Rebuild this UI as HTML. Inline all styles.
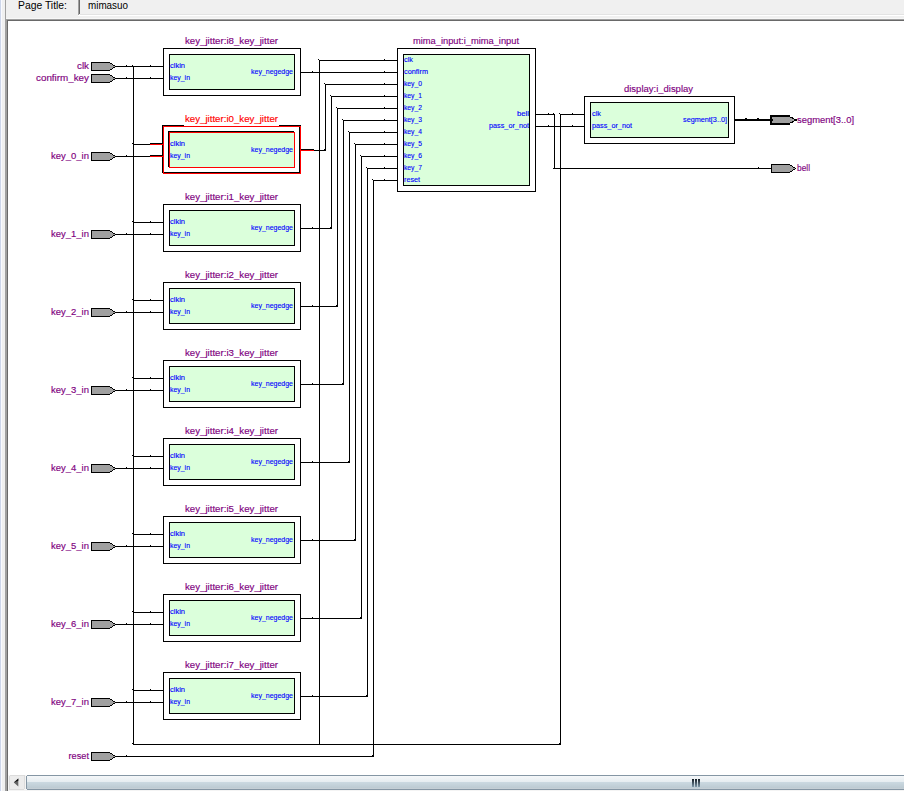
<!DOCTYPE html>
<html><head><meta charset="utf-8"><title>mimasuo</title>
<style>
html,body{margin:0;padding:0;width:904px;height:791px;overflow:hidden;background:#f0f0f0}
svg{display:block}
text{font-family:"Liberation Sans",sans-serif;white-space:pre}
text.s{stroke-width:0.12px}
text.p{stroke-width:0.15px}

rect{shape-rendering:crispEdges}
</style></head><body>
<svg width="904" height="791" viewBox="0 0 904 791">
<rect x="0" y="0" width="904" height="791" fill="#f0f0f0"/>
<rect x="0" y="0" width="1" height="791" fill="#cdd6ea"/>
<rect x="1" y="0" width="1" height="791" fill="#f9faff"/>
<rect x="5" y="0" width="1" height="791" fill="#a0a0a0"/>
<rect x="78" y="0" width="1" height="15" fill="#a0a0a0"/>
<rect x="79" y="0" width="1" height="14" fill="#696969"/>
<rect x="80" y="14" width="824" height="1" fill="#e3e3e3"/>
<rect x="78" y="15" width="826" height="1" fill="#ffffff"/>
<rect x="6" y="18" width="898" height="1" fill="#f8f8f8"/>
<rect x="6" y="19" width="898" height="1" fill="#a0a0a0"/>
<rect x="6" y="19" width="1" height="772" fill="#a0a0a0"/>
<rect x="7" y="20" width="897" height="1" fill="#696969"/>
<rect x="7" y="20" width="1" height="771" fill="#696969"/>
<rect x="8" y="21" width="896" height="754" fill="#ffffff"/>
<text class="h" x="18" y="9" font-size="11" fill="#000" textLength="49" lengthAdjust="spacingAndGlyphs">Page Title:</text>
<text class="h" x="88" y="9" font-size="11" fill="#000" textLength="40" lengthAdjust="spacingAndGlyphs">mimasuo</text>
<rect x="8" y="775" width="896" height="16" fill="#f4f4f4"/>
<rect x="9.5" y="775.5" width="15" height="14" rx="1.5" fill="#ececec" stroke="#dcdcdc"/>
<path d="M13.8 782.5 L18.3 778.6 L18.3 786.4 Z" fill="#666"/>
<path d="M13.8 782.5 L18.3 778.6 L18.3 780.8 Z" fill="#111"/>
<defs><linearGradient id="tg" x1="0" y1="0" x2="0" y2="1"><stop offset="0" stop-color="#f6f8fa"/><stop offset="0.45" stop-color="#e6edf1"/><stop offset="0.5" stop-color="#cad8e0"/><stop offset="0.9" stop-color="#bccad2"/><stop offset="1" stop-color="#d8d8dc"/></linearGradient></defs>
<rect x="26.5" y="775.5" width="900" height="14" rx="2" fill="url(#tg)" stroke="#8596a4"/>
<defs><linearGradient id="gg" x1="0" y1="0" x2="0" y2="1"><stop offset="0" stop-color="#101820"/><stop offset="1" stop-color="#7890a0"/></linearGradient></defs>
<rect x="692" y="779" width="1.6" height="7.5" fill="url(#gg)"/>
<rect x="695" y="779" width="1.6" height="7.5" fill="url(#gg)"/>
<rect x="698" y="779" width="1.6" height="7.5" fill="url(#gg)"/>
<text class="p" x="185" y="44" font-size="9.2" fill="#800080" stroke="#800080" textLength="93" lengthAdjust="spacingAndGlyphs">key_jitter:i8_key_jitter</text>
<rect x="163" y="48" width="138" height="48" fill="#ffffff"/>
<rect x="163" y="48" width="138" height="1" fill="#000"/>
<rect x="163" y="95" width="138" height="1" fill="#000"/>
<rect x="163" y="48" width="1" height="48" fill="#000"/>
<rect x="300" y="48" width="1" height="48" fill="#000"/>
<rect x="169" y="54" width="126" height="36" fill="#dbffdb"/>
<rect x="169" y="54" width="126" height="1" fill="#000"/>
<rect x="169" y="89" width="126" height="1" fill="#000"/>
<rect x="169" y="54" width="1" height="36" fill="#000"/>
<rect x="294" y="54" width="1" height="36" fill="#000"/>
<text class="s" x="170" y="68" font-size="7" fill="#0000ff" stroke="#0000ff" textLength="15" lengthAdjust="spacingAndGlyphs">clkin</text>
<text class="s" x="170" y="80" font-size="7" fill="#0000ff" stroke="#0000ff" textLength="20" lengthAdjust="spacingAndGlyphs">key_in</text>
<text class="s" x="251" y="74" font-size="7" fill="#0000ff" stroke="#0000ff" textLength="42" lengthAdjust="spacingAndGlyphs">key_negedge</text>
<rect x="115" y="66" width="48" height="1" fill="#000"/>
<rect x="126" y="65" width="1" height="1" fill="#000"/>
<rect x="132" y="65" width="1" height="1" fill="#000"/>
<rect x="150" y="65" width="1" height="1" fill="#000"/>
<rect x="115" y="78" width="48" height="1" fill="#000"/>
<rect x="150" y="77" width="1" height="1" fill="#000"/>
<rect x="126" y="77" width="1" height="1" fill="#000"/>
<text class="p" x="185" y="122" font-size="9.2" fill="#ff0000" stroke="#ff0000" textLength="93" lengthAdjust="spacingAndGlyphs">key_jitter:i0_key_jitter</text>
<rect x="162" y="125" width="138" height="1" fill="#000"/>
<rect x="162" y="172" width="138" height="1" fill="#000"/>
<rect x="162" y="125" width="1" height="48" fill="#000"/>
<rect x="299" y="125" width="1" height="48" fill="#000"/>
<rect x="163" y="126" width="138" height="1" fill="#ff0000"/>
<rect x="163" y="173" width="138" height="1" fill="#ff0000"/>
<rect x="163" y="126" width="1" height="48" fill="#ff0000"/>
<rect x="300" y="126" width="1" height="48" fill="#ff0000"/>
<rect x="184" y="125" width="95" height="1" fill="#ffffff"/>
<rect x="300" y="125" width="1" height="1" fill="#000"/>
<rect x="164" y="127" width="135" height="45" fill="#ffffff"/>
<rect x="169" y="132" width="126" height="36" fill="#dbffdb"/>
<rect x="168" y="131" width="126" height="1" fill="#000"/>
<rect x="168" y="166" width="126" height="1" fill="#000"/>
<rect x="168" y="131" width="1" height="36" fill="#000"/>
<rect x="293" y="131" width="1" height="36" fill="#000"/>
<rect x="169" y="132" width="126" height="1" fill="#ff0000"/>
<rect x="169" y="167" width="126" height="1" fill="#ff0000"/>
<rect x="169" y="132" width="1" height="36" fill="#ff0000"/>
<rect x="294" y="132" width="1" height="36" fill="#ff0000"/>
<rect x="170" y="133" width="124" height="34" fill="#dbffdb"/>
<text class="s" x="170" y="146" font-size="7" fill="#0000ff" stroke="#0000ff" textLength="15" lengthAdjust="spacingAndGlyphs">clkin</text>
<text class="s" x="170" y="158" font-size="7" fill="#0000ff" stroke="#0000ff" textLength="20" lengthAdjust="spacingAndGlyphs">key_in</text>
<text class="s" x="251" y="152" font-size="7" fill="#0000ff" stroke="#0000ff" textLength="42" lengthAdjust="spacingAndGlyphs">key_negedge</text>
<rect x="133" y="144" width="17" height="1" fill="#000"/>
<rect x="150" y="143" width="13" height="1" fill="#000"/>
<rect x="150" y="144" width="13" height="1" fill="#ff0000"/>
<rect x="132" y="143" width="1" height="1" fill="#000"/>
<rect x="115" y="156" width="35" height="1" fill="#000"/>
<rect x="150" y="155" width="13" height="1" fill="#000"/>
<rect x="150" y="156" width="13" height="1" fill="#ff0000"/>
<rect x="126" y="155" width="1" height="1" fill="#000"/>
<text class="p" x="185" y="200" font-size="9.2" fill="#800080" stroke="#800080" textLength="93" lengthAdjust="spacingAndGlyphs">key_jitter:i1_key_jitter</text>
<rect x="163" y="204" width="138" height="48" fill="#ffffff"/>
<rect x="163" y="204" width="138" height="1" fill="#000"/>
<rect x="163" y="251" width="138" height="1" fill="#000"/>
<rect x="163" y="204" width="1" height="48" fill="#000"/>
<rect x="300" y="204" width="1" height="48" fill="#000"/>
<rect x="169" y="210" width="126" height="36" fill="#dbffdb"/>
<rect x="169" y="210" width="126" height="1" fill="#000"/>
<rect x="169" y="245" width="126" height="1" fill="#000"/>
<rect x="169" y="210" width="1" height="36" fill="#000"/>
<rect x="294" y="210" width="1" height="36" fill="#000"/>
<text class="s" x="170" y="224" font-size="7" fill="#0000ff" stroke="#0000ff" textLength="15" lengthAdjust="spacingAndGlyphs">clkin</text>
<text class="s" x="170" y="236" font-size="7" fill="#0000ff" stroke="#0000ff" textLength="20" lengthAdjust="spacingAndGlyphs">key_in</text>
<text class="s" x="251" y="230" font-size="7" fill="#0000ff" stroke="#0000ff" textLength="42" lengthAdjust="spacingAndGlyphs">key_negedge</text>
<rect x="133" y="222" width="30" height="1" fill="#000"/>
<rect x="150" y="221" width="1" height="1" fill="#000"/>
<rect x="132" y="221" width="1" height="1" fill="#000"/>
<rect x="115" y="234" width="48" height="1" fill="#000"/>
<rect x="150" y="233" width="1" height="1" fill="#000"/>
<rect x="126" y="233" width="1" height="1" fill="#000"/>
<text class="p" x="185" y="278" font-size="9.2" fill="#800080" stroke="#800080" textLength="93" lengthAdjust="spacingAndGlyphs">key_jitter:i2_key_jitter</text>
<rect x="163" y="282" width="138" height="48" fill="#ffffff"/>
<rect x="163" y="282" width="138" height="1" fill="#000"/>
<rect x="163" y="329" width="138" height="1" fill="#000"/>
<rect x="163" y="282" width="1" height="48" fill="#000"/>
<rect x="300" y="282" width="1" height="48" fill="#000"/>
<rect x="169" y="288" width="126" height="36" fill="#dbffdb"/>
<rect x="169" y="288" width="126" height="1" fill="#000"/>
<rect x="169" y="323" width="126" height="1" fill="#000"/>
<rect x="169" y="288" width="1" height="36" fill="#000"/>
<rect x="294" y="288" width="1" height="36" fill="#000"/>
<text class="s" x="170" y="302" font-size="7" fill="#0000ff" stroke="#0000ff" textLength="15" lengthAdjust="spacingAndGlyphs">clkin</text>
<text class="s" x="170" y="314" font-size="7" fill="#0000ff" stroke="#0000ff" textLength="20" lengthAdjust="spacingAndGlyphs">key_in</text>
<text class="s" x="251" y="308" font-size="7" fill="#0000ff" stroke="#0000ff" textLength="42" lengthAdjust="spacingAndGlyphs">key_negedge</text>
<rect x="133" y="300" width="30" height="1" fill="#000"/>
<rect x="150" y="299" width="1" height="1" fill="#000"/>
<rect x="132" y="299" width="1" height="1" fill="#000"/>
<rect x="115" y="312" width="48" height="1" fill="#000"/>
<rect x="150" y="311" width="1" height="1" fill="#000"/>
<rect x="126" y="311" width="1" height="1" fill="#000"/>
<text class="p" x="185" y="356" font-size="9.2" fill="#800080" stroke="#800080" textLength="93" lengthAdjust="spacingAndGlyphs">key_jitter:i3_key_jitter</text>
<rect x="163" y="360" width="138" height="48" fill="#ffffff"/>
<rect x="163" y="360" width="138" height="1" fill="#000"/>
<rect x="163" y="407" width="138" height="1" fill="#000"/>
<rect x="163" y="360" width="1" height="48" fill="#000"/>
<rect x="300" y="360" width="1" height="48" fill="#000"/>
<rect x="169" y="366" width="126" height="36" fill="#dbffdb"/>
<rect x="169" y="366" width="126" height="1" fill="#000"/>
<rect x="169" y="401" width="126" height="1" fill="#000"/>
<rect x="169" y="366" width="1" height="36" fill="#000"/>
<rect x="294" y="366" width="1" height="36" fill="#000"/>
<text class="s" x="170" y="380" font-size="7" fill="#0000ff" stroke="#0000ff" textLength="15" lengthAdjust="spacingAndGlyphs">clkin</text>
<text class="s" x="170" y="392" font-size="7" fill="#0000ff" stroke="#0000ff" textLength="20" lengthAdjust="spacingAndGlyphs">key_in</text>
<text class="s" x="251" y="386" font-size="7" fill="#0000ff" stroke="#0000ff" textLength="42" lengthAdjust="spacingAndGlyphs">key_negedge</text>
<rect x="133" y="378" width="30" height="1" fill="#000"/>
<rect x="150" y="377" width="1" height="1" fill="#000"/>
<rect x="132" y="377" width="1" height="1" fill="#000"/>
<rect x="115" y="390" width="48" height="1" fill="#000"/>
<rect x="150" y="389" width="1" height="1" fill="#000"/>
<rect x="126" y="389" width="1" height="1" fill="#000"/>
<text class="p" x="185" y="434" font-size="9.2" fill="#800080" stroke="#800080" textLength="93" lengthAdjust="spacingAndGlyphs">key_jitter:i4_key_jitter</text>
<rect x="163" y="438" width="138" height="48" fill="#ffffff"/>
<rect x="163" y="438" width="138" height="1" fill="#000"/>
<rect x="163" y="485" width="138" height="1" fill="#000"/>
<rect x="163" y="438" width="1" height="48" fill="#000"/>
<rect x="300" y="438" width="1" height="48" fill="#000"/>
<rect x="169" y="444" width="126" height="36" fill="#dbffdb"/>
<rect x="169" y="444" width="126" height="1" fill="#000"/>
<rect x="169" y="479" width="126" height="1" fill="#000"/>
<rect x="169" y="444" width="1" height="36" fill="#000"/>
<rect x="294" y="444" width="1" height="36" fill="#000"/>
<text class="s" x="170" y="458" font-size="7" fill="#0000ff" stroke="#0000ff" textLength="15" lengthAdjust="spacingAndGlyphs">clkin</text>
<text class="s" x="170" y="470" font-size="7" fill="#0000ff" stroke="#0000ff" textLength="20" lengthAdjust="spacingAndGlyphs">key_in</text>
<text class="s" x="251" y="464" font-size="7" fill="#0000ff" stroke="#0000ff" textLength="42" lengthAdjust="spacingAndGlyphs">key_negedge</text>
<rect x="133" y="456" width="30" height="1" fill="#000"/>
<rect x="150" y="455" width="1" height="1" fill="#000"/>
<rect x="132" y="455" width="1" height="1" fill="#000"/>
<rect x="115" y="468" width="48" height="1" fill="#000"/>
<rect x="150" y="467" width="1" height="1" fill="#000"/>
<rect x="126" y="467" width="1" height="1" fill="#000"/>
<text class="p" x="185" y="512" font-size="9.2" fill="#800080" stroke="#800080" textLength="93" lengthAdjust="spacingAndGlyphs">key_jitter:i5_key_jitter</text>
<rect x="163" y="516" width="138" height="48" fill="#ffffff"/>
<rect x="163" y="516" width="138" height="1" fill="#000"/>
<rect x="163" y="563" width="138" height="1" fill="#000"/>
<rect x="163" y="516" width="1" height="48" fill="#000"/>
<rect x="300" y="516" width="1" height="48" fill="#000"/>
<rect x="169" y="522" width="126" height="36" fill="#dbffdb"/>
<rect x="169" y="522" width="126" height="1" fill="#000"/>
<rect x="169" y="557" width="126" height="1" fill="#000"/>
<rect x="169" y="522" width="1" height="36" fill="#000"/>
<rect x="294" y="522" width="1" height="36" fill="#000"/>
<text class="s" x="170" y="536" font-size="7" fill="#0000ff" stroke="#0000ff" textLength="15" lengthAdjust="spacingAndGlyphs">clkin</text>
<text class="s" x="170" y="548" font-size="7" fill="#0000ff" stroke="#0000ff" textLength="20" lengthAdjust="spacingAndGlyphs">key_in</text>
<text class="s" x="251" y="542" font-size="7" fill="#0000ff" stroke="#0000ff" textLength="42" lengthAdjust="spacingAndGlyphs">key_negedge</text>
<rect x="133" y="534" width="30" height="1" fill="#000"/>
<rect x="150" y="533" width="1" height="1" fill="#000"/>
<rect x="132" y="533" width="1" height="1" fill="#000"/>
<rect x="115" y="546" width="48" height="1" fill="#000"/>
<rect x="150" y="545" width="1" height="1" fill="#000"/>
<rect x="126" y="545" width="1" height="1" fill="#000"/>
<text class="p" x="185" y="590" font-size="9.2" fill="#800080" stroke="#800080" textLength="93" lengthAdjust="spacingAndGlyphs">key_jitter:i6_key_jitter</text>
<rect x="163" y="594" width="138" height="48" fill="#ffffff"/>
<rect x="163" y="594" width="138" height="1" fill="#000"/>
<rect x="163" y="641" width="138" height="1" fill="#000"/>
<rect x="163" y="594" width="1" height="48" fill="#000"/>
<rect x="300" y="594" width="1" height="48" fill="#000"/>
<rect x="169" y="600" width="126" height="36" fill="#dbffdb"/>
<rect x="169" y="600" width="126" height="1" fill="#000"/>
<rect x="169" y="635" width="126" height="1" fill="#000"/>
<rect x="169" y="600" width="1" height="36" fill="#000"/>
<rect x="294" y="600" width="1" height="36" fill="#000"/>
<text class="s" x="170" y="614" font-size="7" fill="#0000ff" stroke="#0000ff" textLength="15" lengthAdjust="spacingAndGlyphs">clkin</text>
<text class="s" x="170" y="626" font-size="7" fill="#0000ff" stroke="#0000ff" textLength="20" lengthAdjust="spacingAndGlyphs">key_in</text>
<text class="s" x="251" y="620" font-size="7" fill="#0000ff" stroke="#0000ff" textLength="42" lengthAdjust="spacingAndGlyphs">key_negedge</text>
<rect x="133" y="612" width="30" height="1" fill="#000"/>
<rect x="150" y="611" width="1" height="1" fill="#000"/>
<rect x="132" y="611" width="1" height="1" fill="#000"/>
<rect x="115" y="624" width="48" height="1" fill="#000"/>
<rect x="150" y="623" width="1" height="1" fill="#000"/>
<rect x="126" y="623" width="1" height="1" fill="#000"/>
<text class="p" x="185" y="668" font-size="9.2" fill="#800080" stroke="#800080" textLength="93" lengthAdjust="spacingAndGlyphs">key_jitter:i7_key_jitter</text>
<rect x="163" y="672" width="138" height="48" fill="#ffffff"/>
<rect x="163" y="672" width="138" height="1" fill="#000"/>
<rect x="163" y="719" width="138" height="1" fill="#000"/>
<rect x="163" y="672" width="1" height="48" fill="#000"/>
<rect x="300" y="672" width="1" height="48" fill="#000"/>
<rect x="169" y="678" width="126" height="36" fill="#dbffdb"/>
<rect x="169" y="678" width="126" height="1" fill="#000"/>
<rect x="169" y="713" width="126" height="1" fill="#000"/>
<rect x="169" y="678" width="1" height="36" fill="#000"/>
<rect x="294" y="678" width="1" height="36" fill="#000"/>
<text class="s" x="170" y="692" font-size="7" fill="#0000ff" stroke="#0000ff" textLength="15" lengthAdjust="spacingAndGlyphs">clkin</text>
<text class="s" x="170" y="704" font-size="7" fill="#0000ff" stroke="#0000ff" textLength="20" lengthAdjust="spacingAndGlyphs">key_in</text>
<text class="s" x="251" y="698" font-size="7" fill="#0000ff" stroke="#0000ff" textLength="42" lengthAdjust="spacingAndGlyphs">key_negedge</text>
<rect x="133" y="690" width="30" height="1" fill="#000"/>
<rect x="150" y="689" width="1" height="1" fill="#000"/>
<rect x="132" y="689" width="1" height="1" fill="#000"/>
<rect x="115" y="702" width="48" height="1" fill="#000"/>
<rect x="150" y="701" width="1" height="1" fill="#000"/>
<rect x="126" y="701" width="1" height="1" fill="#000"/>
<rect x="133" y="66" width="1" height="679" fill="#000"/>
<rect x="133" y="744" width="428" height="1" fill="#000"/>
<rect x="132" y="743" width="1" height="1" fill="#000"/>
<rect x="91" y="62" width="19" height="1" fill="#000"/>
<rect x="91" y="70" width="19" height="1" fill="#000"/>
<rect x="91" y="62" width="1" height="9" fill="#000"/>
<rect x="92" y="69" width="18" height="1" fill="#a0a0a0"/>
<rect x="110" y="69" width="2" height="1" fill="#000"/>
<rect x="92" y="63" width="18" height="1" fill="#a0a0a0"/>
<rect x="110" y="63" width="2" height="1" fill="#000"/>
<rect x="92" y="68" width="20" height="1" fill="#a0a0a0"/>
<rect x="112" y="68" width="1" height="1" fill="#000"/>
<rect x="92" y="64" width="20" height="1" fill="#a0a0a0"/>
<rect x="112" y="64" width="1" height="1" fill="#000"/>
<rect x="92" y="67" width="21" height="1" fill="#a0a0a0"/>
<rect x="113" y="67" width="2" height="1" fill="#000"/>
<rect x="92" y="65" width="21" height="1" fill="#a0a0a0"/>
<rect x="113" y="65" width="2" height="1" fill="#000"/>
<rect x="92" y="66" width="23" height="1" fill="#a0a0a0"/>
<rect x="115" y="66" width="1" height="1" fill="#000"/>
<text class="p" x="77" y="69" font-size="9.2" fill="#800080" stroke="#800080" textLength="12" lengthAdjust="spacingAndGlyphs">clk</text>
<rect x="91" y="74" width="19" height="1" fill="#000"/>
<rect x="91" y="82" width="19" height="1" fill="#000"/>
<rect x="91" y="74" width="1" height="9" fill="#000"/>
<rect x="92" y="81" width="18" height="1" fill="#a0a0a0"/>
<rect x="110" y="81" width="2" height="1" fill="#000"/>
<rect x="92" y="75" width="18" height="1" fill="#a0a0a0"/>
<rect x="110" y="75" width="2" height="1" fill="#000"/>
<rect x="92" y="80" width="20" height="1" fill="#a0a0a0"/>
<rect x="112" y="80" width="1" height="1" fill="#000"/>
<rect x="92" y="76" width="20" height="1" fill="#a0a0a0"/>
<rect x="112" y="76" width="1" height="1" fill="#000"/>
<rect x="92" y="79" width="21" height="1" fill="#a0a0a0"/>
<rect x="113" y="79" width="2" height="1" fill="#000"/>
<rect x="92" y="77" width="21" height="1" fill="#a0a0a0"/>
<rect x="113" y="77" width="2" height="1" fill="#000"/>
<rect x="92" y="78" width="23" height="1" fill="#a0a0a0"/>
<rect x="115" y="78" width="1" height="1" fill="#000"/>
<text class="p" x="36" y="81" font-size="9.2" fill="#800080" stroke="#800080" textLength="53" lengthAdjust="spacingAndGlyphs">confirm_key</text>
<rect x="91" y="152" width="19" height="1" fill="#000"/>
<rect x="91" y="160" width="19" height="1" fill="#000"/>
<rect x="91" y="152" width="1" height="9" fill="#000"/>
<rect x="92" y="159" width="18" height="1" fill="#a0a0a0"/>
<rect x="110" y="159" width="2" height="1" fill="#000"/>
<rect x="92" y="153" width="18" height="1" fill="#a0a0a0"/>
<rect x="110" y="153" width="2" height="1" fill="#000"/>
<rect x="92" y="158" width="20" height="1" fill="#a0a0a0"/>
<rect x="112" y="158" width="1" height="1" fill="#000"/>
<rect x="92" y="154" width="20" height="1" fill="#a0a0a0"/>
<rect x="112" y="154" width="1" height="1" fill="#000"/>
<rect x="92" y="157" width="21" height="1" fill="#a0a0a0"/>
<rect x="113" y="157" width="2" height="1" fill="#000"/>
<rect x="92" y="155" width="21" height="1" fill="#a0a0a0"/>
<rect x="113" y="155" width="2" height="1" fill="#000"/>
<rect x="92" y="156" width="23" height="1" fill="#a0a0a0"/>
<rect x="115" y="156" width="1" height="1" fill="#000"/>
<text class="p" x="51" y="159" font-size="9.2" fill="#800080" stroke="#800080" textLength="38" lengthAdjust="spacingAndGlyphs">key_0_in</text>
<rect x="91" y="230" width="19" height="1" fill="#000"/>
<rect x="91" y="238" width="19" height="1" fill="#000"/>
<rect x="91" y="230" width="1" height="9" fill="#000"/>
<rect x="92" y="237" width="18" height="1" fill="#a0a0a0"/>
<rect x="110" y="237" width="2" height="1" fill="#000"/>
<rect x="92" y="231" width="18" height="1" fill="#a0a0a0"/>
<rect x="110" y="231" width="2" height="1" fill="#000"/>
<rect x="92" y="236" width="20" height="1" fill="#a0a0a0"/>
<rect x="112" y="236" width="1" height="1" fill="#000"/>
<rect x="92" y="232" width="20" height="1" fill="#a0a0a0"/>
<rect x="112" y="232" width="1" height="1" fill="#000"/>
<rect x="92" y="235" width="21" height="1" fill="#a0a0a0"/>
<rect x="113" y="235" width="2" height="1" fill="#000"/>
<rect x="92" y="233" width="21" height="1" fill="#a0a0a0"/>
<rect x="113" y="233" width="2" height="1" fill="#000"/>
<rect x="92" y="234" width="23" height="1" fill="#a0a0a0"/>
<rect x="115" y="234" width="1" height="1" fill="#000"/>
<text class="p" x="51" y="237" font-size="9.2" fill="#800080" stroke="#800080" textLength="38" lengthAdjust="spacingAndGlyphs">key_1_in</text>
<rect x="91" y="308" width="19" height="1" fill="#000"/>
<rect x="91" y="316" width="19" height="1" fill="#000"/>
<rect x="91" y="308" width="1" height="9" fill="#000"/>
<rect x="92" y="315" width="18" height="1" fill="#a0a0a0"/>
<rect x="110" y="315" width="2" height="1" fill="#000"/>
<rect x="92" y="309" width="18" height="1" fill="#a0a0a0"/>
<rect x="110" y="309" width="2" height="1" fill="#000"/>
<rect x="92" y="314" width="20" height="1" fill="#a0a0a0"/>
<rect x="112" y="314" width="1" height="1" fill="#000"/>
<rect x="92" y="310" width="20" height="1" fill="#a0a0a0"/>
<rect x="112" y="310" width="1" height="1" fill="#000"/>
<rect x="92" y="313" width="21" height="1" fill="#a0a0a0"/>
<rect x="113" y="313" width="2" height="1" fill="#000"/>
<rect x="92" y="311" width="21" height="1" fill="#a0a0a0"/>
<rect x="113" y="311" width="2" height="1" fill="#000"/>
<rect x="92" y="312" width="23" height="1" fill="#a0a0a0"/>
<rect x="115" y="312" width="1" height="1" fill="#000"/>
<text class="p" x="51" y="315" font-size="9.2" fill="#800080" stroke="#800080" textLength="38" lengthAdjust="spacingAndGlyphs">key_2_in</text>
<rect x="91" y="386" width="19" height="1" fill="#000"/>
<rect x="91" y="394" width="19" height="1" fill="#000"/>
<rect x="91" y="386" width="1" height="9" fill="#000"/>
<rect x="92" y="393" width="18" height="1" fill="#a0a0a0"/>
<rect x="110" y="393" width="2" height="1" fill="#000"/>
<rect x="92" y="387" width="18" height="1" fill="#a0a0a0"/>
<rect x="110" y="387" width="2" height="1" fill="#000"/>
<rect x="92" y="392" width="20" height="1" fill="#a0a0a0"/>
<rect x="112" y="392" width="1" height="1" fill="#000"/>
<rect x="92" y="388" width="20" height="1" fill="#a0a0a0"/>
<rect x="112" y="388" width="1" height="1" fill="#000"/>
<rect x="92" y="391" width="21" height="1" fill="#a0a0a0"/>
<rect x="113" y="391" width="2" height="1" fill="#000"/>
<rect x="92" y="389" width="21" height="1" fill="#a0a0a0"/>
<rect x="113" y="389" width="2" height="1" fill="#000"/>
<rect x="92" y="390" width="23" height="1" fill="#a0a0a0"/>
<rect x="115" y="390" width="1" height="1" fill="#000"/>
<text class="p" x="51" y="393" font-size="9.2" fill="#800080" stroke="#800080" textLength="38" lengthAdjust="spacingAndGlyphs">key_3_in</text>
<rect x="91" y="464" width="19" height="1" fill="#000"/>
<rect x="91" y="472" width="19" height="1" fill="#000"/>
<rect x="91" y="464" width="1" height="9" fill="#000"/>
<rect x="92" y="471" width="18" height="1" fill="#a0a0a0"/>
<rect x="110" y="471" width="2" height="1" fill="#000"/>
<rect x="92" y="465" width="18" height="1" fill="#a0a0a0"/>
<rect x="110" y="465" width="2" height="1" fill="#000"/>
<rect x="92" y="470" width="20" height="1" fill="#a0a0a0"/>
<rect x="112" y="470" width="1" height="1" fill="#000"/>
<rect x="92" y="466" width="20" height="1" fill="#a0a0a0"/>
<rect x="112" y="466" width="1" height="1" fill="#000"/>
<rect x="92" y="469" width="21" height="1" fill="#a0a0a0"/>
<rect x="113" y="469" width="2" height="1" fill="#000"/>
<rect x="92" y="467" width="21" height="1" fill="#a0a0a0"/>
<rect x="113" y="467" width="2" height="1" fill="#000"/>
<rect x="92" y="468" width="23" height="1" fill="#a0a0a0"/>
<rect x="115" y="468" width="1" height="1" fill="#000"/>
<text class="p" x="51" y="471" font-size="9.2" fill="#800080" stroke="#800080" textLength="38" lengthAdjust="spacingAndGlyphs">key_4_in</text>
<rect x="91" y="542" width="19" height="1" fill="#000"/>
<rect x="91" y="550" width="19" height="1" fill="#000"/>
<rect x="91" y="542" width="1" height="9" fill="#000"/>
<rect x="92" y="549" width="18" height="1" fill="#a0a0a0"/>
<rect x="110" y="549" width="2" height="1" fill="#000"/>
<rect x="92" y="543" width="18" height="1" fill="#a0a0a0"/>
<rect x="110" y="543" width="2" height="1" fill="#000"/>
<rect x="92" y="548" width="20" height="1" fill="#a0a0a0"/>
<rect x="112" y="548" width="1" height="1" fill="#000"/>
<rect x="92" y="544" width="20" height="1" fill="#a0a0a0"/>
<rect x="112" y="544" width="1" height="1" fill="#000"/>
<rect x="92" y="547" width="21" height="1" fill="#a0a0a0"/>
<rect x="113" y="547" width="2" height="1" fill="#000"/>
<rect x="92" y="545" width="21" height="1" fill="#a0a0a0"/>
<rect x="113" y="545" width="2" height="1" fill="#000"/>
<rect x="92" y="546" width="23" height="1" fill="#a0a0a0"/>
<rect x="115" y="546" width="1" height="1" fill="#000"/>
<text class="p" x="51" y="549" font-size="9.2" fill="#800080" stroke="#800080" textLength="38" lengthAdjust="spacingAndGlyphs">key_5_in</text>
<rect x="91" y="620" width="19" height="1" fill="#000"/>
<rect x="91" y="628" width="19" height="1" fill="#000"/>
<rect x="91" y="620" width="1" height="9" fill="#000"/>
<rect x="92" y="627" width="18" height="1" fill="#a0a0a0"/>
<rect x="110" y="627" width="2" height="1" fill="#000"/>
<rect x="92" y="621" width="18" height="1" fill="#a0a0a0"/>
<rect x="110" y="621" width="2" height="1" fill="#000"/>
<rect x="92" y="626" width="20" height="1" fill="#a0a0a0"/>
<rect x="112" y="626" width="1" height="1" fill="#000"/>
<rect x="92" y="622" width="20" height="1" fill="#a0a0a0"/>
<rect x="112" y="622" width="1" height="1" fill="#000"/>
<rect x="92" y="625" width="21" height="1" fill="#a0a0a0"/>
<rect x="113" y="625" width="2" height="1" fill="#000"/>
<rect x="92" y="623" width="21" height="1" fill="#a0a0a0"/>
<rect x="113" y="623" width="2" height="1" fill="#000"/>
<rect x="92" y="624" width="23" height="1" fill="#a0a0a0"/>
<rect x="115" y="624" width="1" height="1" fill="#000"/>
<text class="p" x="51" y="627" font-size="9.2" fill="#800080" stroke="#800080" textLength="38" lengthAdjust="spacingAndGlyphs">key_6_in</text>
<rect x="91" y="698" width="19" height="1" fill="#000"/>
<rect x="91" y="706" width="19" height="1" fill="#000"/>
<rect x="91" y="698" width="1" height="9" fill="#000"/>
<rect x="92" y="705" width="18" height="1" fill="#a0a0a0"/>
<rect x="110" y="705" width="2" height="1" fill="#000"/>
<rect x="92" y="699" width="18" height="1" fill="#a0a0a0"/>
<rect x="110" y="699" width="2" height="1" fill="#000"/>
<rect x="92" y="704" width="20" height="1" fill="#a0a0a0"/>
<rect x="112" y="704" width="1" height="1" fill="#000"/>
<rect x="92" y="700" width="20" height="1" fill="#a0a0a0"/>
<rect x="112" y="700" width="1" height="1" fill="#000"/>
<rect x="92" y="703" width="21" height="1" fill="#a0a0a0"/>
<rect x="113" y="703" width="2" height="1" fill="#000"/>
<rect x="92" y="701" width="21" height="1" fill="#a0a0a0"/>
<rect x="113" y="701" width="2" height="1" fill="#000"/>
<rect x="92" y="702" width="23" height="1" fill="#a0a0a0"/>
<rect x="115" y="702" width="1" height="1" fill="#000"/>
<text class="p" x="51" y="705" font-size="9.2" fill="#800080" stroke="#800080" textLength="38" lengthAdjust="spacingAndGlyphs">key_7_in</text>
<rect x="91" y="752" width="19" height="1" fill="#000"/>
<rect x="91" y="760" width="19" height="1" fill="#000"/>
<rect x="91" y="752" width="1" height="9" fill="#000"/>
<rect x="92" y="759" width="18" height="1" fill="#a0a0a0"/>
<rect x="110" y="759" width="2" height="1" fill="#000"/>
<rect x="92" y="753" width="18" height="1" fill="#a0a0a0"/>
<rect x="110" y="753" width="2" height="1" fill="#000"/>
<rect x="92" y="758" width="20" height="1" fill="#a0a0a0"/>
<rect x="112" y="758" width="1" height="1" fill="#000"/>
<rect x="92" y="754" width="20" height="1" fill="#a0a0a0"/>
<rect x="112" y="754" width="1" height="1" fill="#000"/>
<rect x="92" y="757" width="21" height="1" fill="#a0a0a0"/>
<rect x="113" y="757" width="2" height="1" fill="#000"/>
<rect x="92" y="755" width="21" height="1" fill="#a0a0a0"/>
<rect x="113" y="755" width="2" height="1" fill="#000"/>
<rect x="92" y="756" width="23" height="1" fill="#a0a0a0"/>
<rect x="115" y="756" width="1" height="1" fill="#000"/>
<text class="p" x="68.5" y="759" font-size="9.2" fill="#800080" stroke="#800080" textLength="20.5" lengthAdjust="spacingAndGlyphs">reset</text>
<rect x="115" y="756" width="259" height="1" fill="#000"/>
<rect x="126" y="755" width="1" height="1" fill="#000"/>
<text class="p" x="413" y="44" font-size="9.2" fill="#800080" stroke="#800080" textLength="106" lengthAdjust="spacingAndGlyphs">mima_input:i_mima_input</text>
<rect x="397" y="48" width="139" height="144" fill="#ffffff"/>
<rect x="397" y="48" width="139" height="1" fill="#000"/>
<rect x="397" y="191" width="139" height="1" fill="#000"/>
<rect x="397" y="48" width="1" height="144" fill="#000"/>
<rect x="535" y="48" width="1" height="144" fill="#000"/>
<rect x="403" y="54" width="127" height="132" fill="#dbffdb"/>
<rect x="403" y="54" width="127" height="1" fill="#000"/>
<rect x="403" y="185" width="127" height="1" fill="#000"/>
<rect x="403" y="54" width="1" height="132" fill="#000"/>
<rect x="529" y="54" width="1" height="132" fill="#000"/>
<text class="s" x="404" y="62" font-size="7" fill="#0000ff" stroke="#0000ff" textLength="9" lengthAdjust="spacingAndGlyphs">clk</text>
<text class="s" x="404" y="74" font-size="7" fill="#0000ff" stroke="#0000ff" textLength="24" lengthAdjust="spacingAndGlyphs">confirm</text>
<text class="s" x="404" y="86" font-size="7" fill="#0000ff" stroke="#0000ff" textLength="18" lengthAdjust="spacingAndGlyphs">key_0</text>
<text class="s" x="404" y="98" font-size="7" fill="#0000ff" stroke="#0000ff" textLength="18" lengthAdjust="spacingAndGlyphs">key_1</text>
<text class="s" x="404" y="110" font-size="7" fill="#0000ff" stroke="#0000ff" textLength="18" lengthAdjust="spacingAndGlyphs">key_2</text>
<text class="s" x="404" y="122" font-size="7" fill="#0000ff" stroke="#0000ff" textLength="18" lengthAdjust="spacingAndGlyphs">key_3</text>
<text class="s" x="404" y="134" font-size="7" fill="#0000ff" stroke="#0000ff" textLength="18" lengthAdjust="spacingAndGlyphs">key_4</text>
<text class="s" x="404" y="146" font-size="7" fill="#0000ff" stroke="#0000ff" textLength="18" lengthAdjust="spacingAndGlyphs">key_5</text>
<text class="s" x="404" y="158" font-size="7" fill="#0000ff" stroke="#0000ff" textLength="18" lengthAdjust="spacingAndGlyphs">key_6</text>
<text class="s" x="404" y="170" font-size="7" fill="#0000ff" stroke="#0000ff" textLength="18" lengthAdjust="spacingAndGlyphs">key_7</text>
<text class="s" x="404" y="182" font-size="7" fill="#0000ff" stroke="#0000ff" textLength="16" lengthAdjust="spacingAndGlyphs">reset</text>
<text class="s" x="517" y="116" font-size="7" fill="#0000ff" stroke="#0000ff" textLength="12" lengthAdjust="spacingAndGlyphs">bell</text>
<text class="s" x="489" y="128" font-size="7" fill="#0000ff" stroke="#0000ff" textLength="40" lengthAdjust="spacingAndGlyphs">pass_or_not</text>
<rect x="319" y="60" width="1" height="685" fill="#000"/>
<rect x="319" y="60" width="78" height="1" fill="#000"/>
<rect x="318" y="59" width="1" height="1" fill="#000"/>
<rect x="384" y="59" width="1" height="1" fill="#000"/>
<rect x="301" y="72" width="96" height="1" fill="#000"/>
<rect x="312" y="71" width="1" height="1" fill="#000"/>
<rect x="384" y="71" width="1" height="1" fill="#000"/>
<rect x="301" y="150" width="13" height="1" fill="#ff0000"/>
<rect x="301" y="149" width="13" height="1" fill="#000"/>
<rect x="314" y="150" width="12" height="1" fill="#000"/>
<rect x="325" y="84" width="1" height="67" fill="#000"/>
<rect x="324" y="149" width="1" height="1" fill="#000"/>
<rect x="325" y="84" width="72" height="1" fill="#000"/>
<rect x="324" y="83" width="1" height="1" fill="#000"/>
<rect x="384" y="83" width="1" height="1" fill="#000"/>
<rect x="301" y="228" width="31" height="1" fill="#000"/>
<rect x="312" y="227" width="1" height="1" fill="#000"/>
<rect x="331" y="96" width="1" height="133" fill="#000"/>
<rect x="330" y="227" width="1" height="1" fill="#000"/>
<rect x="331" y="96" width="66" height="1" fill="#000"/>
<rect x="330" y="95" width="1" height="1" fill="#000"/>
<rect x="384" y="95" width="1" height="1" fill="#000"/>
<rect x="301" y="306" width="37" height="1" fill="#000"/>
<rect x="312" y="305" width="1" height="1" fill="#000"/>
<rect x="337" y="108" width="1" height="199" fill="#000"/>
<rect x="336" y="305" width="1" height="1" fill="#000"/>
<rect x="337" y="108" width="60" height="1" fill="#000"/>
<rect x="336" y="107" width="1" height="1" fill="#000"/>
<rect x="384" y="107" width="1" height="1" fill="#000"/>
<rect x="301" y="384" width="43" height="1" fill="#000"/>
<rect x="312" y="383" width="1" height="1" fill="#000"/>
<rect x="343" y="120" width="1" height="265" fill="#000"/>
<rect x="342" y="383" width="1" height="1" fill="#000"/>
<rect x="343" y="120" width="54" height="1" fill="#000"/>
<rect x="342" y="119" width="1" height="1" fill="#000"/>
<rect x="384" y="119" width="1" height="1" fill="#000"/>
<rect x="301" y="462" width="49" height="1" fill="#000"/>
<rect x="312" y="461" width="1" height="1" fill="#000"/>
<rect x="349" y="132" width="1" height="331" fill="#000"/>
<rect x="348" y="461" width="1" height="1" fill="#000"/>
<rect x="349" y="132" width="48" height="1" fill="#000"/>
<rect x="348" y="131" width="1" height="1" fill="#000"/>
<rect x="384" y="131" width="1" height="1" fill="#000"/>
<rect x="301" y="540" width="55" height="1" fill="#000"/>
<rect x="312" y="539" width="1" height="1" fill="#000"/>
<rect x="355" y="144" width="1" height="397" fill="#000"/>
<rect x="354" y="539" width="1" height="1" fill="#000"/>
<rect x="355" y="144" width="42" height="1" fill="#000"/>
<rect x="354" y="143" width="1" height="1" fill="#000"/>
<rect x="384" y="143" width="1" height="1" fill="#000"/>
<rect x="301" y="618" width="61" height="1" fill="#000"/>
<rect x="312" y="617" width="1" height="1" fill="#000"/>
<rect x="361" y="156" width="1" height="463" fill="#000"/>
<rect x="360" y="617" width="1" height="1" fill="#000"/>
<rect x="361" y="156" width="36" height="1" fill="#000"/>
<rect x="360" y="155" width="1" height="1" fill="#000"/>
<rect x="384" y="155" width="1" height="1" fill="#000"/>
<rect x="301" y="696" width="67" height="1" fill="#000"/>
<rect x="312" y="695" width="1" height="1" fill="#000"/>
<rect x="367" y="168" width="1" height="529" fill="#000"/>
<rect x="366" y="695" width="1" height="1" fill="#000"/>
<rect x="367" y="168" width="30" height="1" fill="#000"/>
<rect x="366" y="167" width="1" height="1" fill="#000"/>
<rect x="384" y="167" width="1" height="1" fill="#000"/>
<rect x="373" y="180" width="1" height="577" fill="#000"/>
<rect x="373" y="180" width="24" height="1" fill="#000"/>
<rect x="372" y="179" width="1" height="1" fill="#000"/>
<rect x="384" y="179" width="1" height="1" fill="#000"/>
<rect x="372" y="755" width="1" height="1" fill="#000"/>
<rect x="536" y="114" width="19" height="1" fill="#000"/>
<rect x="554" y="114" width="1" height="55" fill="#000"/>
<rect x="554" y="168" width="217" height="1" fill="#000"/>
<rect x="548" y="113" width="1" height="1" fill="#000"/>
<rect x="553" y="113" width="1" height="1" fill="#000"/>
<rect x="553" y="168" width="1" height="1" fill="#000"/>
<rect x="758" y="167" width="1" height="1" fill="#000"/>
<rect x="536" y="126" width="48" height="1" fill="#000"/>
<rect x="548" y="125" width="1" height="1" fill="#000"/>
<rect x="572" y="125" width="1" height="1" fill="#000"/>
<rect x="560" y="114" width="1" height="631" fill="#000"/>
<rect x="560" y="114" width="24" height="1" fill="#000"/>
<rect x="559" y="113" width="1" height="1" fill="#000"/>
<rect x="572" y="113" width="1" height="1" fill="#000"/>
<rect x="559" y="743" width="1" height="1" fill="#000"/>
<text class="p" x="624" y="92" font-size="9.2" fill="#800080" stroke="#800080" textLength="69" lengthAdjust="spacingAndGlyphs">display:i_display</text>
<rect x="584" y="96" width="151" height="48" fill="#ffffff"/>
<rect x="584" y="96" width="151" height="1" fill="#000"/>
<rect x="584" y="143" width="151" height="1" fill="#000"/>
<rect x="584" y="96" width="1" height="48" fill="#000"/>
<rect x="734" y="96" width="1" height="48" fill="#000"/>
<rect x="590" y="102" width="139" height="36" fill="#dbffdb"/>
<rect x="590" y="102" width="139" height="1" fill="#000"/>
<rect x="590" y="137" width="139" height="1" fill="#000"/>
<rect x="590" y="102" width="1" height="36" fill="#000"/>
<rect x="728" y="102" width="1" height="36" fill="#000"/>
<text class="s" x="592" y="116" font-size="7" fill="#0000ff" stroke="#0000ff" textLength="9" lengthAdjust="spacingAndGlyphs">clk</text>
<text class="s" x="592" y="128" font-size="7" fill="#0000ff" stroke="#0000ff" textLength="40" lengthAdjust="spacingAndGlyphs">pass_or_not</text>
<text class="s" x="683" y="122" font-size="7" fill="#0000ff" stroke="#0000ff" textLength="44" lengthAdjust="spacingAndGlyphs">segment[3..0]</text>
<rect x="735" y="119" width="35" height="2" fill="#000"/>
<rect x="745" y="118" width="2" height="1" fill="#000"/>
<rect x="757" y="118" width="2" height="1" fill="#000"/>
<rect x="770" y="115" width="20" height="2" fill="#000"/>
<rect x="770" y="123" width="20" height="2" fill="#000"/>
<rect x="770" y="115" width="2" height="10" fill="#000"/>
<rect x="772" y="117" width="18" height="1" fill="#a0a0a0"/>
<rect x="790" y="117" width="3" height="1" fill="#000"/>
<rect x="772" y="118" width="20" height="1" fill="#a0a0a0"/>
<rect x="792" y="118" width="2" height="1" fill="#000"/>
<rect x="772" y="119" width="22" height="1" fill="#a0a0a0"/>
<rect x="794" y="119" width="3" height="1" fill="#000"/>
<rect x="772" y="120" width="22" height="1" fill="#a0a0a0"/>
<rect x="794" y="120" width="3" height="1" fill="#000"/>
<rect x="772" y="121" width="20" height="1" fill="#a0a0a0"/>
<rect x="792" y="121" width="2" height="1" fill="#000"/>
<rect x="772" y="122" width="18" height="1" fill="#a0a0a0"/>
<rect x="790" y="122" width="3" height="1" fill="#000"/>
<rect x="770" y="119" width="3" height="1" fill="#000"/>
<rect x="770" y="120" width="3" height="1" fill="#000"/>
<text class="p" x="797" y="123" font-size="9.2" fill="#800080" stroke="#800080" textLength="57" lengthAdjust="spacingAndGlyphs">segment[3..0]</text>
<rect x="771" y="164" width="19" height="1" fill="#000"/>
<rect x="771" y="172" width="19" height="1" fill="#000"/>
<rect x="771" y="164" width="1" height="9" fill="#000"/>
<rect x="772" y="171" width="18" height="1" fill="#a0a0a0"/>
<rect x="790" y="171" width="2" height="1" fill="#000"/>
<rect x="772" y="165" width="18" height="1" fill="#a0a0a0"/>
<rect x="790" y="165" width="2" height="1" fill="#000"/>
<rect x="772" y="170" width="20" height="1" fill="#a0a0a0"/>
<rect x="792" y="170" width="1" height="1" fill="#000"/>
<rect x="772" y="166" width="20" height="1" fill="#a0a0a0"/>
<rect x="792" y="166" width="1" height="1" fill="#000"/>
<rect x="772" y="169" width="21" height="1" fill="#a0a0a0"/>
<rect x="793" y="169" width="2" height="1" fill="#000"/>
<rect x="772" y="167" width="21" height="1" fill="#a0a0a0"/>
<rect x="793" y="167" width="2" height="1" fill="#000"/>
<rect x="772" y="168" width="23" height="1" fill="#a0a0a0"/>
<rect x="795" y="168" width="1" height="1" fill="#000"/>
<rect x="795" y="168" width="1" height="1" fill="#000"/>
<text class="p" x="797" y="171" font-size="9.2" fill="#800080" stroke="#800080" textLength="13" lengthAdjust="spacingAndGlyphs">bell</text>
</svg>
</body></html>
